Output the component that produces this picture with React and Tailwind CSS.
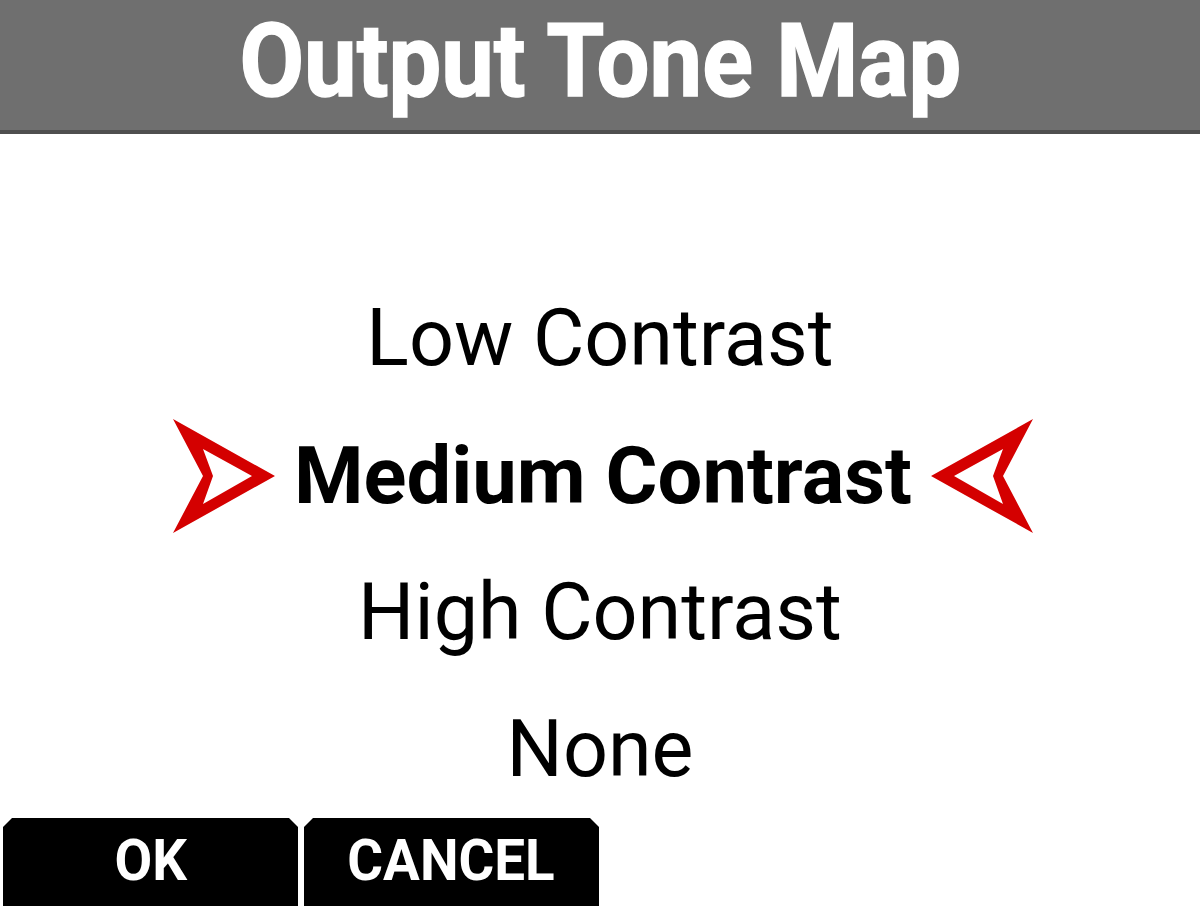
export default function App() {
    const items = ["Low Contrast", "Medium Contrast", "High Contrast", "None"]
    const selected = 1

    return (
        <div className="w-[1200px] h-[906px] bg-white flex flex-col overflow-hidden font-['Roboto','Liberation_Sans',sans-serif] text-black">
            <div className="h-[134px] bg-[#6f6f6f] border-b-[4px] border-[#4f4f4f] flex items-center justify-center">
                <span className="inline-block text-white font-bold text-[102px] leading-none scale-x-[0.92] -mt-[8px] whitespace-nowrap [-webkit-text-stroke:1.5px_white]">
                    Output Tone Map
                </span>
            </div>

            <div className="pt-[136px] flex flex-col">
                {items.map((item, i) => (
                    <div key={item} className="h-[137px] flex items-center justify-center">
                        {i === selected ? (
                            <div className="flex items-center gap-[16px] pl-[6px]">
                                <Arrow />
                                <span className="font-bold text-[79.5px] leading-[137px] whitespace-nowrap">{item}</span>
                                <Arrow flip />
                            </div>
                        ) : (
                            <span className="text-[79px] leading-[137px] whitespace-nowrap">{item}</span>
                        )}
                    </div>
                ))}
            </div>

            <div className="h-[88px] flex gap-[6px] pl-[3px]">
                <Button label="OK" />
                <Button label="CANCEL" />
            </div>
        </div>
    )
}

function Arrow({ flip }) {
    return (
        <svg
            width="108"
            height="118"
            viewBox="0 0 108 118"
            className={flip ? "-scale-x-100" : ""}
        >
            <path
                d="M3 2 L105 59 L3 116 L33 59 Z M33 32 L43 59 L33 87 L82 59 Z"
                fill="#d40000"
                fillRule="evenodd"
            />
        </svg>
    )
}

function Button({ label }) {
    return (
        <div className="w-[295px] h-[88px] bg-black text-white font-bold text-[57px] flex justify-center pt-[10px] leading-none [clip-path:polygon(9px_0,calc(100%-9px)_0,100%_9px,100%_100%,0_100%,0_9px)]">
            <span className="inline-block scale-x-[0.96] pt-[4px]">{label}</span>
        </div>
    )
}
